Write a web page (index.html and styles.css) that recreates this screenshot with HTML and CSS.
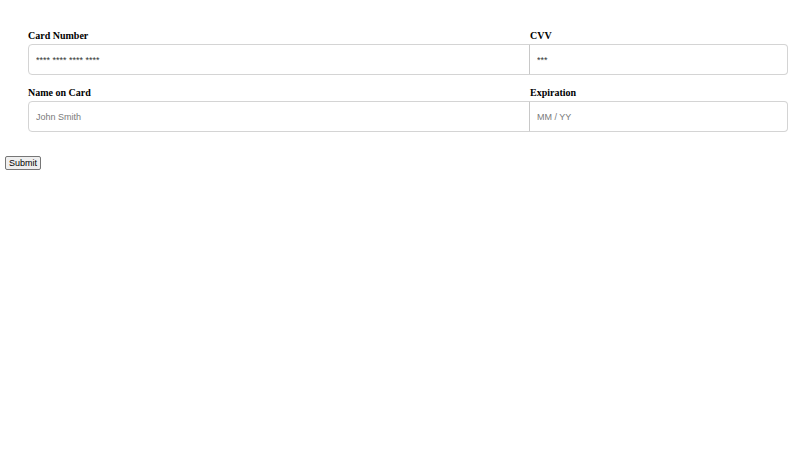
FILE: index.html
```html
<!DOCTYPE html>
<html>
<head>
<meta charset="utf-8">
<link rel="stylesheet" href="styles.css">
</head>
<body>
<form class="payment">
  <div class="fields">
    <div class="row">
      <div class="field main">
        <label class="label">Card Number</label>
        <input class="input first masked" type="text" placeholder="**** **** **** ****">
      </div>
      <div class="field side">
        <label class="label">CVV</label>
        <input class="input last masked" type="text" placeholder="***">
      </div>
    </div>
    <div class="row">
      <div class="field main">
        <label class="label">Name on Card</label>
        <input class="input first" type="text" placeholder="John Smith">
      </div>
      <div class="field side">
        <label class="label">Expiration</label>
        <input class="input last" type="text" placeholder="MM / YY">
      </div>
    </div>
  </div>
  <button class="submit" type="button">Submit</button>
</form>
</body>
</html>
```

FILE: styles.css
```css
html, body {
  margin: 0;
  padding: 0;
  background: #fff;
}
.payment {
  display: flex;
  flex-direction: column;
  align-items: flex-start;
  padding-top: 28px;
}
.fields {
  display: flex;
  flex-direction: column;
  gap: 10px;
  padding: 0 12px 0 28px;
  align-self: stretch;
}
.row {
  display: flex;
}
.field {
  display: flex;
  flex-direction: column;
}
.field.main {
  width: 502px;
}
.field.side {
  flex: 1;
}
.label {
  font-family: "Liberation Serif", serif;
  font-weight: bold;
  font-size: 10px;
  line-height: 15px;
  margin-bottom: 1px;
  color: #000;
}
.input {
  box-sizing: border-box;
  height: 31px;
  border: 1px solid #d4d4d4;
  padding: 0 7px;
  font-family: "Liberation Sans", Arial, sans-serif;
  font-size: 9px;
  color: #222;
  outline: none;
}
.input::placeholder {
  color: #7a7a7a;
}
.input.masked::placeholder {
  color: #333;
}
.input.first {
  border-radius: 4px 0 0 4px;
}
.input.last {
  border-radius: 0 4px 4px 0;
  border-left-color: #c8c8c8;
  margin-left: -1px;
}
.submit {
  margin: 24px 0 0 5px;
  font-family: "Liberation Sans", Arial, sans-serif;
  font-size: 9px;
  line-height: 10px;
  padding: 1px 3px;
  color: #000;
  background: #efefef;
  border: 1px solid #767676;
  border-radius: 2px;
}
```
